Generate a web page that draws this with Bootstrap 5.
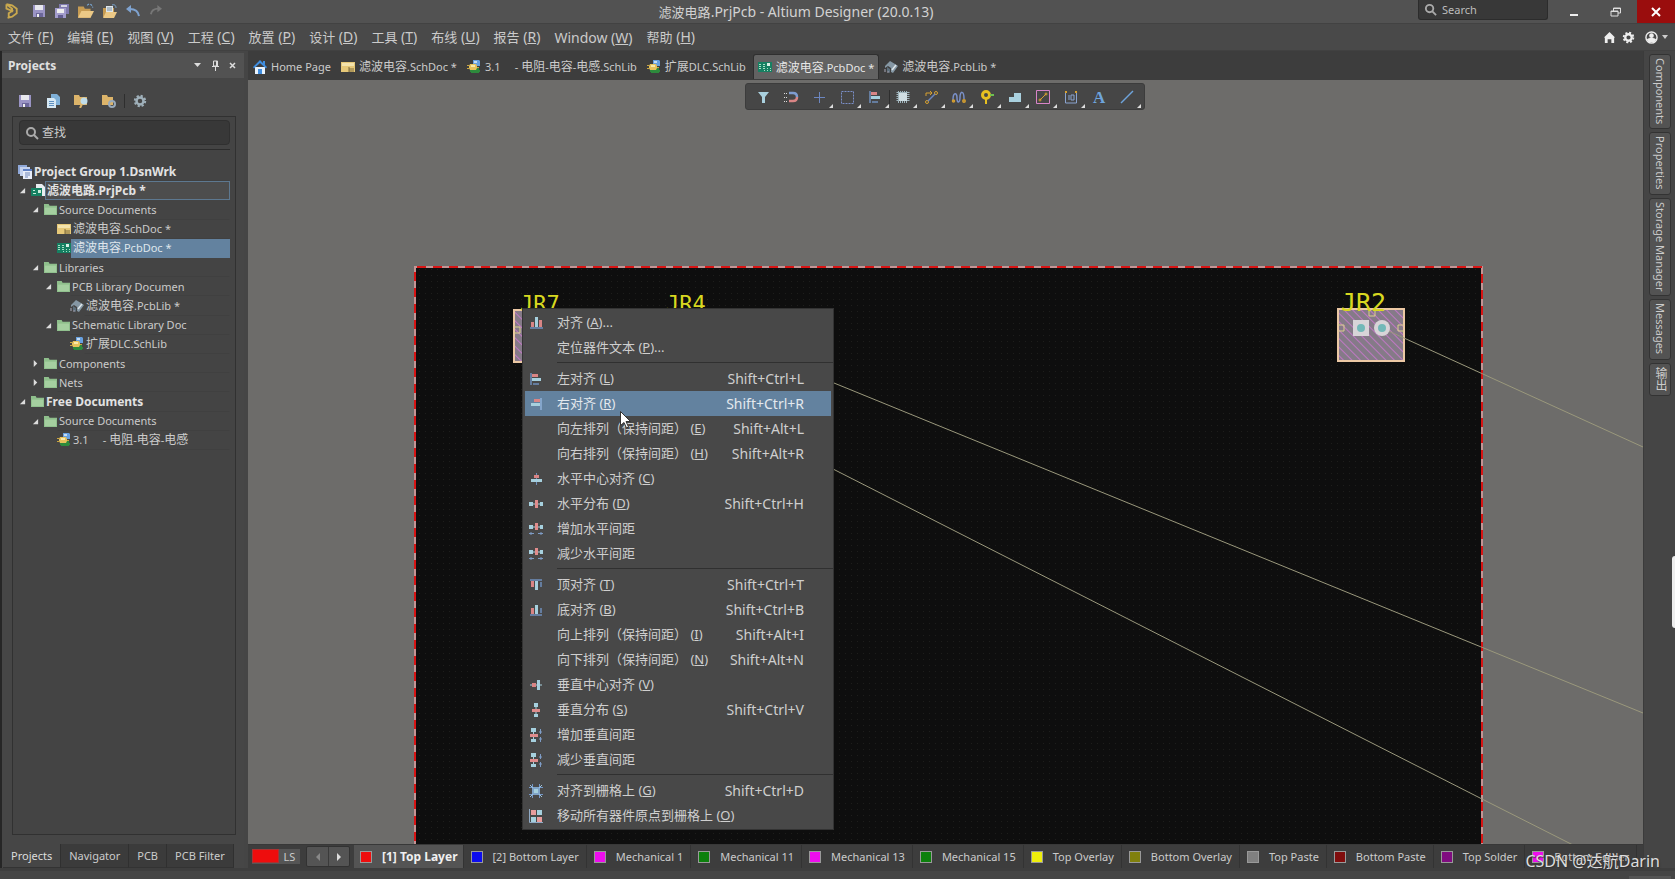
<!DOCTYPE html>
<html lang="zh-CN">
<head>
<meta charset="utf-8">
<meta name="viewport" content="width=device-width, initial-scale=1">
<title>滤波电路.PrjPcb - Altium Designer (20.0.13)</title>
<link href="https://cdn.jsdelivr.net/npm/bootstrap@5.3.0/dist/css/bootstrap.min.css" rel="stylesheet">
<style>
:root{--ui:"Noto Sans","Noto Sans CJK SC",sans-serif}
body{font:11px/19px var(--ui);color:#cbcbcb;background:#454545;white-space:nowrap}
button,input{font:inherit;color:inherit}
button{background:none;border:0;padding:0}
svg{display:block;flex:none}
.cj{font-size:12px}
.s14{font-size:14px}
.s14 .cj{font-size:13px}
.s12{font-size:12px}
.i11{width:11px;height:11px}.i13{width:13px;height:13px}.i14{width:14px;height:14px}.i16{width:16px;height:16px}
.titlebar{height:24px;background:#525252;border-bottom:1px solid #424242}
.titlebar .tools{gap:9px;padding-left:3px;padding-bottom:2px;flex:1 1 0}
.titlebar .caption{flex:none;color:#d2d2d2;padding-right:86px}
.titlebar .right{flex:1 1 0}
.gsearch{width:130px;height:20px;margin-right:5px;background:#383838;border:1px solid #2c2c2c;border-top:0;border-radius:0 0 3px 3px;padding:0 5px;gap:5px}
.gsearch input,.psearch input{background:none;border:0;outline:0;padding:0;width:100%;min-width:0}
.gsearch input::placeholder,.psearch input::placeholder{color:#bdbdbd;opacity:1}
.winbtn{width:42px;height:23px}
.winclose{width:38px;background:#9a0d0d;color:#fff}
.menubar{height:27px;background:#494949;gap:14px;padding:0 7px 0 8px;border-bottom:1px solid #414141}
.menubar a,.doctab,.layertab,.ptab{color:inherit;text-decoration:none}
.menubar .acct{gap:6px;color:#eee}
.acct .who{gap:4px}
.projpanel{width:244px;background:#464646;border-left:2px solid #262626;padding-top:2px}
.phead{height:25px;background:#525252;padding:0 7px 0 6px;color:#e0e0e0;gap:9px}
.ptools{height:38px;gap:14px;padding:8px 0 0 16px}
.ptools .bar,.actbar .bar{width:1px;height:14px;background:#2e2e2e}
.ptools .bar{margin:0 -6px}
.treebox{margin:0 8px 0 10px;border:1px solid #313131;flex:1;padding:3px 5px 0 0;background:#444}
.psearch{height:25px;margin-left:6px;background:#383838;border:1px solid #303030;border-radius:4px;padding:0 5px;gap:3px}
.psep{height:1px;background:#2c2c2c;margin:4px 0 12px 6px}
.tree{height:288px;display:grid;grid-template-rows:repeat(15,minmax(0,1fr));padding-left:5px}
.tree li{display:flex;align-items:center;position:relative}
.tree .lbl{flex:1;padding-left:1px;height:100%;line-height:16px;display:flex;align-items:center;border:1px solid transparent;border-bottom-color:#404040;white-space:pre}
.tree .b{font-weight:700;font-size:12px;color:#e2e2e2}
.tree .focus{border-color:#5d7890;background:#4d4d4d}
.tree .sel{background:#63829f;border-color:#63829f;color:#dfe6ec}
.l1{padding-left:13px}.l2{padding-left:26px}.l3{padding-left:39px}.l4{padding-left:52px}
.tw{position:absolute;margin-left:-12px;width:7px;height:7px}
.ptabs{height:24px;margin-top:9px;background:#3b3b3b;align-self:flex-start;margin-left:1px}
.ptab{padding:0 8px;border-right:1px solid #303030;border-bottom:1px solid #333;line-height:24px;text-align:center}
.ptab.on{background:#464646;color:#ddd}
.doctabs{height:29px;background:#3d3d3d;padding:3px 0 1px 0}
.doctab{gap:4px;padding:0 4px;border:1px solid transparent;height:25px;white-space:pre}
.doctab.on{background:#626262;border-color:#2f2f2f;border-bottom:0;border-radius:3px 3px 0 0;color:#e6e6e6;margin-left:2px}
.canvas{background:#6d6c6a;overflow:hidden}
.board{position:absolute;inset:0;width:100%;height:100%}
.actbar{position:absolute;top:3px;left:497px;height:27px;background:#464646;border:1px solid #3c3c3c;border-radius:3px;padding:0 3px}
.actbar button{width:28px;height:25px;display:flex;align-items:center;justify-content:center;position:relative}
.actbar svg{overflow:visible}
.actbar .bar{margin:0 -1px 0 0}
.actbar .more::after{content:"";position:absolute;right:0;bottom:1px;border:2px solid transparent;border-right-color:#ddd;border-bottom-color:#ddd}
.ctx{position:absolute;top:228px;left:274px;width:312px;padding:1px 2px;margin:0;background:#484848;border:1px solid #333;border-radius:0;color:#cfcfcf}
.ctx button{display:flex;align-items:center;width:100%;height:25px;padding:0 27px 0 4px;font-size:13px}
.ctx .t{margin-left:14px}
.ctx .k{margin-left:auto;font-size:14px}
.ctx .cj{font-size:13px}
.ctx .hot{background:#63829f;color:#e4e9ee}
.ctx .rule{height:6px;padding:2px 0 0 32px;margin-right:-2px}
.ctx .rule::before{content:"";display:block;height:1px;background:#303030}
.cursor{position:absolute;left:372px;top:331px;width:12px;height:18px}
.layers{height:24px;background:#3d3d3d;border-top:1px solid #383838;overflow:hidden}
.ls{margin:0 6px 0 4px;height:15px;background:#555}
.ls i{width:27px;height:14px;background:#ee0d0d;border:1px solid #a33}
.ls span{width:21px;line-height:15px;text-align:center}
.nav2{height:21px;background:#545454;border:1px solid #323232;border-radius:2px;margin-right:4px}
.nav2 button{width:21px;display:flex;align-items:center;justify-content:center}
.nav2 button+button{border-left:1px solid #3a3a3a}
.layertab{height:24px;padding:0 7px;gap:10px;border-right:1px solid #333}
.layertab.on{background:#545454;color:#f0f0f0;font-weight:700;font-size:12px;padding:0 5px 0 6px}
.sw{width:12px;height:12px;border:1px solid #999}
.dock{width:32px;background:#454545;border-left:1px solid #3b3b3b;padding:3px 4px 0 5px;gap:3px}
.dock button{writing-mode:vertical-rl;background:#535353;border:1px solid #333;border-radius:3px;padding:3px 0 4px;width:22px;line-height:20px}
.status{height:11px;background:#454545;border-top:3px solid #3e3e3e}
.status i{width:42px;height:3px;background:#555;margin:5px 4px 0 auto}
.mark-csdn{position:absolute;right:15px;bottom:6px;font-size:16px;line-height:24px;color:#ddd;text-shadow:1px 1px 1px #333}
.mark-csdn .cj{font-size:16px}
.grip{position:absolute;right:0;top:556px;width:3px;height:72px;background:#eee;border-radius:3px 0 0 3px}
</style>
</head>
<body class="d-flex flex-column vh-100 overflow-hidden position-relative">

<svg width="0" height="0" class="position-absolute" aria-hidden="true">
<symbol id="floppy" viewBox="0 0 14 14"><path fill="#9a94c4" d="M1 1h12v12H1z"/><path fill="#e8e8ee" d="M3 1h8v5H3z"/><path fill="#6c679a" d="M4 9h7v4H4z"/><path fill="#eee" d="M5 10h2v3H5z"/></symbol>
<symbol id="floppies" viewBox="0 0 14 14"><path fill="#7f79ad" d="M4 0h10v10H4z"/><path fill="#d4d4e4" d="M6 1h6v2H6z"/><path fill="#a29ccc" d="M0 4h11v10H0z"/><path fill="#eee" d="M2 5h7v4H2z"/><path fill="#615c90" d="M3 11h5v3H3z"/></symbol>
<symbol id="open" viewBox="0 0 14 14"><path fill="#c79c53" d="M0 3h5l1 2h5v8H0z"/><path fill="#ecc986" d="M3 7h11l-3 6H0z"/><path d="M8 2c2-2 4-1 5 2" fill="none" stroke="#79a6d0" stroke-dasharray="2 1"/></symbol>
<symbol id="opendoc" viewBox="0 0 14 14"><path fill="#c79c53" d="M0 4h11v9H0z"/><path fill="#dfe6ea" d="M3 2h7v7H3z"/><path stroke="#7a90a0" d="M4 4h5M4 6h5"/><path fill="#ecc986" d="M3 8h11l-3 6H0z"/><path d="M9 1c3-1 4 1 4 3" fill="none" stroke="#79a6d0"/></symbol>
<symbol id="undo" viewBox="0 0 14 14"><path d="M13 12C12 6 8 5 4 5" fill="none" stroke="#7fa3d0" stroke-width="2"/><path fill="#7fa3d0" d="M0 5l5-4v8z"/></symbol>
<symbol id="redo" viewBox="0 0 14 14"><path d="M2 11C3 6 6 5 10 5" fill="none" stroke="#777" stroke-width="2"/><path fill="#777" d="M14 5L9 1v8z"/></symbol>
<symbol id="mag" viewBox="0 0 14 14"><circle cx="6" cy="6" r="4" fill="none" stroke="#aaa" stroke-width="2"/><path d="M9 9l4 4" stroke="#aaa" stroke-width="2"/></symbol>
<symbol id="gear" viewBox="0 0 14 14"><circle cx="7" cy="7" r="5.200" fill="none" stroke="currentColor" stroke-width="2" stroke-dasharray="2.200 1.884"/><circle cx="7" cy="7" r="3.500" fill="none" stroke="currentColor" stroke-width="2.500"/></symbol>
<symbol id="house" viewBox="0 0 14 14"><path fill="currentColor" d="M7 1l6 6h-1v6H9V9H5v4H2V7H1z"/></symbol>
<symbol id="home" viewBox="0 0 14 14"><path fill="#e9f2fb" d="M2 7h10v7H2z"/><path fill="#3f8ee0" d="M5 9h4v5H5zM7 0l7 7-1 1.500-6-5.500-6 5.500L0 7zM10 1h2v4l-2-2z"/></symbol>
<symbol id="sch" viewBox="0 0 14 14"><path fill="#e6c878" d="M0 2h14v10H0z"/><path fill="#f4e3ac" d="M1 3h12v3H1z"/><path d="M8 9h5M8 11h5M8 7v5" stroke="#7c6a3c"/></symbol>
<symbol id="schlib" viewBox="0 0 14 14"><path fill="#67a0e0" d="M6 0h6l1 1v5H6z"/><path fill="#c4dcf4" d="M7 1h3v2H7z"/><path fill="#2d8a3c" d="M4 7h8v6H4zM3 10h10v2H3z"/><path fill="#e8c35c" d="M3 4h6l1 2v2L9 10H3L2 8V6z"/><path fill="#fae9a8" d="M4 5h4v2H4z"/><path d="M0 5.500h2M0 8.500h2M10 7.500h2" stroke="#caa53f"/></symbol>
<symbol id="pcb" viewBox="0 0 14 14"><path fill="#168062" d="M0 2h14v10H0z"/><path fill="#d9efe4" d="M9 3h3v3H9z"/><path d="M1 4.500h2M1 6.500h2M1 8.500h2M5 4.500h2M5 6.500h2M5 8.500h2M6 10.500h1M9 10.500h1M12 10.500h1M9 8.500h1M12 8.500h1" stroke="#a8e0c4"/></symbol>
<symbol id="pcbprj" viewBox="0 0 14 14"><path fill="#e8edf0" d="M5 0h6l3 3v9H5z"/><path fill="#168062" d="M0 4h11v8H0z"/><path fill="#c9ead9" d="M7 6h3v3H7zM2 6h2v1H2zM2 9h3v1H2z"/></symbol>
<symbol id="pcblib" viewBox="0 0 14 14"><path fill="#8597a4" d="M1 6l5-5 5 3 3 2-5 7-2-1V8L4 6 1 8z"/><path fill="#5d6f7c" d="M3 7l3 2v4L3 11z"/><path d="M8 10l4-5" stroke="#dfe6ea" stroke-width="1.500"/><path d="M1 9v3M4 11v2" stroke="#aab"/></symbol>
<symbol id="folder" viewBox="0 0 14 14"><path fill="#8fbf8c" d="M0 1h5l1 2h8v10H0z"/><path fill="#a5cfa0" d="M1 5h12v7H1z"/></symbol>
<symbol id="group" viewBox="0 0 14 14"><path fill="#8fa8d8" d="M0 0h9v9H0z"/><path fill="#c4d2ee" d="M2 2h10v9H2z"/><path fill="#e9eefa" d="M5 4h9v10H5z"/><path fill="#5d7fc4" d="M5 4h9v2H5z"/><path d="M7 8h5M7 10h5M7 12h3" stroke="#6f86b8"/></symbol>
<symbol id="down" viewBox="0 0 8 8"><path fill="#ddd" d="M7 1v6H1z"/></symbol>
<symbol id="side" viewBox="0 0 8 8"><path fill="#ddd" d="M2 0l4 4-4 4z"/></symbol>
<symbol id="left" viewBox="0 0 8 8"><path fill="#888" d="M6 0L2 4l4 4z"/></symbol>
<symbol id="m-bars" viewBox="0 0 14 14"><path fill="#d98585" d="M2 6h3v5H2zM10 4h3v7h-3z"/><path fill="#a6d0de" d="M6 1h3v10H6z"/><path stroke="#6f8fbc" stroke-width="1.500" d="M1 12h13"/></symbol>
<symbol id="m-bot" viewBox="0 0 14 14"><path fill="#d98585" d="M2 5h3v6H2z"/><path fill="#a6d0de" d="M6 2h3v9H6z"/><path stroke="#6f8fbc" stroke-width="1.500" d="M1 12h12M12 5v5"/></symbol>
<symbol id="m-left" viewBox="0 0 14 14"><path stroke="#6f8fbc" stroke-width="1.500" d="M2 1v12M4 12h6"/><path fill="#d98585" d="M3 2h6v3H3z"/><path fill="#a6d0de" d="M3 6h9v3H3z"/></symbol>
<symbol id="m-right" viewBox="0 0 14 14"><path stroke="#8fb0d8" stroke-width="1.500" d="M12 1v12"/><path fill="#d98585" d="M5 2h6v3H5z"/><path fill="#a6d0de" d="M2 6h9v3H2z"/></symbol>
<symbol id="m-hc" viewBox="0 0 14 14"><path stroke="#6f8fbc" d="M7.500 1v12"/><path fill="#d98585" d="M5 3h5v3H5z"/><path fill="#a6d0de" d="M2 7h11v3H2z"/></symbol>
<symbol id="m-hd" viewBox="0 0 14 14"><path stroke="#a6d0de" d="M0 7h14"/><path fill="#a6d0de" d="M0 5h4v4H0zM11 5h3v4h-3z"/><path fill="#e08c8c" d="M6 3h3v8H6z"/></symbol>
<symbol id="m-hg" viewBox="0 0 14 14"><path stroke="#a6d0de" d="M0 5h14"/><path fill="#a6d0de" d="M0 3h4v4H0zM11 3h3v4h-3z"/><path fill="#e08c8c" d="M6 1h3v7H6z"/><path stroke="#7e9cc6" d="M0 11.500h5M9 11.500h5M2 10v3M12 10v3"/></symbol>
<symbol id="m-top" viewBox="0 0 14 14"><path stroke="#6f8fbc" stroke-width="1.500" d="M1 2h12M12 4v5"/><path fill="#d98585" d="M2 3h3v6H2z"/><path fill="#a6d0de" d="M6 3h3v9H6z"/></symbol>
<symbol id="m-vc" viewBox="0 0 14 14"><path stroke="#a6d0de" d="M1 7h12"/><path fill="#d98585" d="M3 5h4v4H3z"/><path fill="#a6d0de" d="M8 2h3v10H8z"/></symbol>
<symbol id="m-vd" viewBox="0 0 14 14"><path stroke="#a6d0de" d="M7 0v14"/><path fill="#a6d0de" d="M5 0h4v4H5zM5 11h4v3H5z"/><path fill="#e08c8c" d="M3 6h8v3H3z"/></symbol>
<symbol id="m-vg" viewBox="0 0 14 14"><path stroke="#a6d0de" d="M4.500 0v14"/><path fill="#a6d0de" d="M2 0h5v4H2zM2 11h5v3H2z"/><path fill="#e08c8c" d="M1 6h8v3H1z"/><path stroke="#7e9cc6" d="M11.500 1v5M11.500 9v5M10 4h3M10 11h3"/></symbol>
<symbol id="m-grid" viewBox="0 0 14 14"><path stroke="#7597c8" d="M3.500 0v14M10.500 0v14M0 3.500h14M0 10.500h14"/><path fill="#7fa3c8" d="M3 3h8v8H3z"/><path fill="#a6d0de" d="M5 5h4v4H5z"/><path stroke="#9cc4dc" d="M1 1l3 3M13 1l-3 3M1 13l3-3M13 13l-3-3"/></symbol>
<symbol id="m-org" viewBox="0 0 14 14"><path stroke="#8fa9c4" fill="none" d="M.5 0v13.500H14"/><path fill="#e89c9c" d="M2 1h5v5H2zM8 8h5v5H8z"/><path fill="#a6d0de" d="M8 1h5v5H8zM2 8h5v5H2z"/></symbol>
</svg>

<header class="titlebar d-flex align-items-center flex-shrink-0">
  <div class="tools d-flex align-items-center">
    <svg class="i16" viewBox="0 0 14 14"><path d="M3 1l5 1 4 3v4l-4 3-4 1M3 1v4l5 2-3 2v4M3 1l5 4v3" fill="none" stroke="#c9a84e" stroke-width="1.600"/></svg>
    <button aria-label="保存"><svg class="i14 ms-1"><use href="#floppy"/></svg></button>
    <button aria-label="全部保存"><svg class="i14"><use href="#floppies"/></svg></button>
    <button aria-label="打开"><svg class="i16"><use href="#open"/></svg></button>
    <button aria-label="打开文档"><svg class="i14"><use href="#opendoc"/></svg></button>
    <button aria-label="撤销"><svg class="i14"><use href="#undo"/></svg></button>
    <button aria-label="重做"><svg class="i13"><use href="#redo"/></svg></button>
  </div>
  <div class="caption s14">滤波电路.PrjPcb - Altium Designer (20.0.13)</div>
  <div class="right d-flex justify-content-end align-items-start align-self-start">
    <label class="gsearch d-flex align-items-center"><svg class="i13"><use href="#mag"/></svg><input type="text" placeholder="Search" aria-label="Search"></label>
    <button class="winbtn" aria-label="最小化"><svg class="mx-auto" width="10" height="10"><path d="M1 8h8" stroke="#eee" stroke-width="2"/></svg></button>
    <button class="winbtn" aria-label="还原"><svg class="mx-auto" width="12" height="10" fill="none" stroke="#ddd"><path d="M3.500 4V1h7v5H8M1 4h7v5H1zM3 1.500h8M1 4.500h7"/></svg></button>
    <button class="winbtn winclose" aria-label="关闭"><svg class="mx-auto" width="10" height="10"><path d="M1 1l8 8M9 1L1 9" stroke="#fff" stroke-width="2"/></svg></button>
  </div>
</header>

<nav class="menubar s14 d-flex align-items-center flex-shrink-0">
  <a href="#">文件 (<u>F</u>)</a><a href="#">编辑 (<u>E</u>)</a><a href="#">视图 (<u>V</u>)</a><a href="#">工程 (<u>C</u>)</a><a href="#">放置 (<u>P</u>)</a><a href="#">设计 (<u>D</u>)</a><a href="#">工具 (<u>T</u>)</a><a href="#">布线 (<u>U</u>)</a><a href="#">报告 (<u>R</u>)</a><a href="#">Window (<u>W</u>)</a><a href="#">帮助 (<u>H</u>)</a>
  <div class="acct d-flex align-items-center ms-auto">
    <svg class="i13"><use href="#house"/></svg><svg class="i13 me-1"><use href="#gear"/></svg>
    <span class="who d-flex align-items-center"><svg class="i13" viewBox="0 0 14 14"><circle cx="7" cy="7" r="6" fill="none" stroke="#eee" stroke-width="1.500"/><circle cx="7" cy="5" r="2.500" fill="#eee"/><path fill="#eee" d="M2 9c2-2 8-2 10 0l-2 3.500H4z"/></svg>
    <svg width="6" height="4"><path fill="#ccc" d="M0 0h6L3 4z"/></svg></span>
  </div>
</nav>

<main class="d-flex flex-grow-1" style="min-height:0">
  <aside class="projpanel d-flex flex-column flex-shrink-0">
    <div class="phead s12 d-flex align-items-center"><strong class="me-auto">Projects</strong>
      <svg width="8" height="5"><path fill="#ddd" d="M0 0h7L3.500 4z"/></svg>
      <svg width="9" height="11"><path d="M2.500 1h4v5h-4zM1 6.500h7M4.500 7v4M5.500 1v5" fill="none" stroke="#ddd"/></svg>
      <svg width="8" height="8"><path d="M1 1l5 5M6 1L1 6" stroke="#ddd" stroke-width="1.500"/></svg>
    </div>
    <div class="ptools d-flex align-items-center">
      <button aria-label="保存"><svg class="i14"><use href="#floppy"/></svg></button>
      <button aria-label="编译"><svg class="i14" viewBox="0 0 14 14"><path fill="#7fb0d8" d="M5 0h6l3 3v8H5z"/><path fill="#d6e8f4" d="M1 4h7l2 2v8H1z"/><path stroke="#5d8fc0" d="M3 7.500h5M3 9.500h5M3 11.500h5"/></svg></button>
      <button aria-label="查找文件"><svg class="i14" viewBox="0 0 14 14"><path fill="#dcb46a" d="M0 1h5l1 2h7v8H0z"/><circle cx="10" cy="7" r="3.500" fill="#bfdcea"/><path stroke="#dcb46a" stroke-width="2" d="M8 10l-2 4"/></svg></button>
      <button aria-label="文件选项"><svg class="i14" viewBox="0 0 14 14"><path fill="#dcb46a" d="M0 1h5l1 2h5v8H0z"/><circle cx="10" cy="10" r="3" fill="none" stroke="#9ab" stroke-width="2"/></svg></button>
      <span class="bar"></span>
      <button aria-label="设置" style="color:#9fb0ba"><svg class="i14"><use href="#gear"/></svg></button>
    </div>
    <div class="treebox">
      <label class="psearch d-flex align-items-center"><svg class="i14"><use href="#mag"/></svg><input type="text" value="查找" class="s12" aria-label="查找"></label>
      <div class="psep"></div>
      <ul class="tree list-unstyled mb-0">
        <li><svg class="i14"><use href="#group"/></svg><span class="lbl b">Project Group 1.DsnWrk</span></li>
        <li class="l1"><svg class="tw"><use href="#down"/></svg><svg class="i14"><use href="#pcbprj"/></svg><span class="lbl b focus">滤波电路.PrjPcb *</span></li>
        <li class="l2"><svg class="tw"><use href="#down"/></svg><svg class="i13"><use href="#folder"/></svg><span class="lbl">Source Documents</span></li>
        <li class="l3"><svg class="i14"><use href="#sch"/></svg><span class="lbl">滤波电容.SchDoc *</span></li>
        <li class="l3"><svg class="i14"><use href="#pcb"/></svg><span class="lbl sel">滤波电容.PcbDoc *</span></li>
        <li class="l2"><svg class="tw"><use href="#down"/></svg><svg class="i13"><use href="#folder"/></svg><span class="lbl">Libraries</span></li>
        <li class="l3"><svg class="tw"><use href="#down"/></svg><svg class="i13"><use href="#folder"/></svg><span class="lbl">PCB Library Documen</span></li>
        <li class="l4"><svg class="i14"><use href="#pcblib"/></svg><span class="lbl">滤波电容.PcbLib *</span></li>
        <li class="l3"><svg class="tw"><use href="#down"/></svg><svg class="i13"><use href="#folder"/></svg><span class="lbl">Schematic Library Doc</span></li>
        <li class="l4"><svg class="i14"><use href="#schlib"/></svg><span class="lbl">扩展DLC.SchLib</span></li>
        <li class="l2"><svg class="tw"><use href="#side"/></svg><svg class="i13"><use href="#folder"/></svg><span class="lbl">Components</span></li>
        <li class="l2"><svg class="tw"><use href="#side"/></svg><svg class="i13"><use href="#folder"/></svg><span class="lbl">Nets</span></li>
        <li class="l1"><svg class="tw"><use href="#down"/></svg><svg class="i13"><use href="#folder"/></svg><span class="lbl b">Free Documents</span></li>
        <li class="l2"><svg class="tw"><use href="#down"/></svg><svg class="i13"><use href="#folder"/></svg><span class="lbl">Source Documents</span></li>
        <li class="l3"><svg class="i14"><use href="#schlib"/></svg><span class="lbl">3.1     - 电阻-电容-电感</span></li>
      </ul>
    </div>
    <div class="ptabs d-flex"><a class="ptab on" href="#">Projects</a><a class="ptab" href="#">Navigator</a><a class="ptab" href="#">PCB</a><a class="ptab" href="#">PCB Filter</a></div>
  </aside>

  <section class="d-flex flex-column flex-grow-1 ms-1" style="min-width:0">
    <nav class="doctabs d-flex flex-shrink-0">
      <a class="doctab d-flex align-items-center" href="#"><svg class="i14"><use href="#home"/></svg>Home Page</a>
      <a class="doctab d-flex align-items-center" href="#"><svg class="i14"><use href="#sch"/></svg><span>滤波电容.SchDoc *</span></a>
      <a class="doctab d-flex align-items-center" href="#"><svg class="i14"><use href="#schlib"/></svg><span>3.1     - 电阻-电容-电感.SchLib</span></a>
      <a class="doctab d-flex align-items-center" href="#"><svg class="i14"><use href="#schlib"/></svg><span>扩展DLC.SchLib</span></a>
      <a class="doctab on d-flex align-items-center" href="#"><svg class="i14"><use href="#pcb"/></svg><span>滤波电容.PcbDoc *</span></a>
      <a class="doctab d-flex align-items-center" href="#"><svg class="i14"><use href="#pcblib"/></svg><span>滤波电容.PcbLib *</span></a>
    </nav>

    <div class="canvas position-relative flex-grow-1">
      <svg class="board" viewBox="0 0 1395 765" preserveAspectRatio="xMinYMin slice">
        <defs>
          <pattern id="dots" width="6" height="6" patternUnits="userSpaceOnUse"><path fill="#1e1e1c" d="M3 3h1v1H3z"/></pattern>
          <pattern id="hatch" width="6" height="6" patternUnits="userSpaceOnUse" patternTransform="rotate(-45)"><path fill="#857a88" d="M0 0h6v6H0z"/><path fill="#c078c4" d="M0 0h1v6H0z"/></pattern>
        </defs>
        <path fill="#0e0e0e" d="M167 187h1067v590H167z"/><path fill="url(#dots)" d="M167 187h1067v590H167z"/>
        <path fill="none" stroke="#c49494" stroke-width="2" d="M167 777V187h1067v590"/>
        <path fill="none" stroke="#d81414" stroke-width="2" stroke-dasharray="9 7" d="M167 777V187h1067v590"/>
        <g stroke="#dcd08c" fill="none">
          <path fill="url(#hatch)" stroke="#ecc8a4" stroke-width="2" d="M1090 229h66v52h-66zM266 230h66v52h-66z"/>
          <path d="M1121 229v7h6v-7M1090 245h6v6h-6M1156 245h-6v6h6M266 247h6v6h-6"/>
        </g>
        <g font-family="DejaVu Sans Mono" fill="#d8d820"><text x="1093" y="231" font-size="25">JR2</text><text x="272" y="231" font-size="22">JR7</text><text x="418" y="231" font-size="22">JR4</text></g>
        <path stroke="#9a987c" d="M1134 248l261 119M586 303l809 330M586 389.500L1234 719l91 46" fill="none"/>
        <path fill="#d8d4d8" d="M1105 240h16v16h-16z"/><circle cx="1134" cy="248" r="8" fill="#d8d4d8"/>
        <circle cx="1113" cy="248" r="4" fill="#72b8b8"/><circle cx="1134" cy="248" r="4" fill="#72b8b8"/>
      </svg>

      <div class="actbar d-flex align-items-center">
        <button aria-label="过滤"><svg class="i14" viewBox="0 0 14 14"><path fill="#a9d0de" d="M2 2h11L9 7v6H6V7z"/></svg></button>
        <button aria-label="捕捉"><svg class="i14" viewBox="0 0 14 14"><path d="M5 3h4q4 0 4 4" fill="none" stroke="#7e9cd0" stroke-width="2.500"/><path d="M13 7q0 4-4 4H5" fill="none" stroke="#d98585" stroke-width="2.500"/><path stroke="#ddd" stroke-dasharray="1 1" d="M0 3.500h4M0 7.500h4M0 11.500h4"/></svg></button>
        <button class="more" aria-label="移动"><svg class="i14"><path d="M7.500 2v11M2 7.500h11" stroke="#6c86c0"/></svg></button>
        <button class="more" aria-label="选择"><svg class="i14"><path d="M1.500 1.500h12v12h-12z" fill="none" stroke="#7a8fc8" stroke-dasharray="2 1"/></svg></button>
        <button class="more" aria-label="对齐"><svg class="i14"><use href="#m-left"/></svg></button>
        <span class="bar"></span>
        <button class="more" aria-label="器件"><svg class="i14"><path stroke="#9fb4bc" stroke-dasharray="1 1" stroke-width="12" d="M2 7h10"/><path stroke="#9fb4bc" stroke-dasharray="1 1" stroke-width="13" d="M7 2v10"/><path fill="#cfdde2" d="M3 3h8v8H3z"/></svg></button>
        <button class="more" aria-label="布线"><svg class="i14" fill="none" stroke="#d6a030"><circle cx="3" cy="12" r="1.500"/><circle cx="12" cy="3" r="1.500"/><path d="M2 6V3h5M6 1l2 2-2 2"/><path stroke="#6c86c0" stroke-width="1.500" d="M4 11l7-7"/></svg></button>
        <button class="more" aria-label="差分"><svg class="i14" fill="none" stroke="#7a90c8" stroke-width="1.500"><path d="M1 10c0-8 4-8 4-2s3 5 3-1 4-7 4 2"/><circle cx="1.500" cy="11" r="1" stroke="#d6a030"/><circle cx="12" cy="11" r="1.200" stroke="#d6a030"/></svg></button>
        <button class="more" aria-label="过孔"><svg class="i14"><circle cx="6" cy="5" r="3.500" fill="none" stroke="#e6c020" stroke-width="3"/><path stroke="#e6c020" stroke-width="2" d="M6 9v5"/><path stroke="#6fbf50" stroke-width="2" d="M10 5h4"/></svg></button>
        <button class="more" aria-label="铺铜"><svg class="i14"><path fill="#a9d0de" d="M1 7h5V3h7v9H1z"/></svg></button>
        <button class="more" aria-label="禁布"><svg class="i14" fill="none"><path stroke="#d884c8" d="M.5.500h13v13H.500z"/><path stroke="#d6a030" d="M4 10l6-6"/><circle cx="4" cy="10" r="1" stroke="#d6a030"/><circle cx="10" cy="4" r="1" stroke="#d6a030"/></svg></button>
        <button class="more" aria-label="尺寸"><svg class="i14" fill="none" stroke="#8aa4d0"><path d="M1.500 3v10h11V3M5 5v5M7 5h3v5H7z"/><path stroke="#d6a030" stroke-width="2" d="M1 2h2M11 2h2"/></svg></button>
        <button aria-label="文本"><svg class="i14"><text x="1" y="13" font-family="Liberation Serif" font-weight="700" font-size="17" fill="#6ea4dc">A</text></svg></button>
        <button class="more" aria-label="线条"><svg class="i14"><path d="M1 13L13 1" stroke="#6ea4dc" stroke-width="1.500"/></svg></button>
      </div>

      <div class="ctx" role="menu">
        <button><svg class="i14"><use href="#m-bars"/></svg><span class="t">对齐 (<u>A</u>)...</span></button>
        <button><svg class="i14"></svg><span class="t">定位器件文本 (<u>P</u>)...</span></button>
        <div class="rule"></div>
        <button><svg class="i14"><use href="#m-left"/></svg><span class="t">左对齐 (<u>L</u>)</span><span class="k">Shift+Ctrl+L</span></button>
        <button class="hot"><svg class="i14"><use href="#m-right"/></svg><span class="t">右对齐 (<u>R</u>)</span><span class="k">Shift+Ctrl+R</span></button>
        <button><svg class="i14"></svg><span class="t">向左排列（保持间距） (<u>E</u>)</span><span class="k">Shift+Alt+L</span></button>
        <button><svg class="i14"></svg><span class="t">向右排列（保持间距） (<u>H</u>)</span><span class="k">Shift+Alt+R</span></button>
        <button><svg class="i14"><use href="#m-hc"/></svg><span class="t">水平中心对齐 (<u>C</u>)</span></button>
        <button><svg class="i14"><use href="#m-hd"/></svg><span class="t">水平分布 (<u>D</u>)</span><span class="k">Shift+Ctrl+H</span></button>
        <button><svg class="i14"><use href="#m-hg"/></svg><span class="t">增加水平间距</span></button>
        <button><svg class="i14"><use href="#m-hg"/></svg><span class="t">减少水平间距</span></button>
        <div class="rule"></div>
        <button><svg class="i14"><use href="#m-top"/></svg><span class="t">顶对齐 (<u>T</u>)</span><span class="k">Shift+Ctrl+T</span></button>
        <button><svg class="i14"><use href="#m-bot"/></svg><span class="t">底对齐 (<u>B</u>)</span><span class="k">Shift+Ctrl+B</span></button>
        <button><svg class="i14"></svg><span class="t">向上排列（保持间距） (<u>I</u>)</span><span class="k">Shift+Alt+I</span></button>
        <button><svg class="i14"></svg><span class="t">向下排列（保持间距） (<u>N</u>)</span><span class="k">Shift+Alt+N</span></button>
        <button><svg class="i14"><use href="#m-vc"/></svg><span class="t">垂直中心对齐 (<u>V</u>)</span></button>
        <button><svg class="i14"><use href="#m-vd"/></svg><span class="t">垂直分布 (<u>S</u>)</span><span class="k">Shift+Ctrl+V</span></button>
        <button><svg class="i14"><use href="#m-vg"/></svg><span class="t">增加垂直间距</span></button>
        <button><svg class="i14"><use href="#m-vg"/></svg><span class="t">减少垂直间距</span></button>
        <div class="rule"></div>
        <button><svg class="i14"><use href="#m-grid"/></svg><span class="t">对齐到栅格上 (<u>G</u>)</span><span class="k">Shift+Ctrl+D</span></button>
        <button><svg class="i14"><use href="#m-org"/></svg><span class="t">移动所有器件原点到栅格上 (<u>O</u>)</span></button>
      </div>
      <svg class="cursor" viewBox="0 0 12 18"><path fill="#fff" stroke="#333" d="M.5.500v14l3.500-3 2.500 5.500 2-1L6 10.500h4.500z"/></svg>
    </div>

    <nav class="layers d-flex align-items-center flex-shrink-0">
      <button class="ls d-flex"><i></i><span>LS</span></button>
      <div class="nav2 d-flex"><button aria-label="上一层"><svg width="8" height="8"><use href="#left"/></svg></button><button aria-label="下一层"><svg width="8" height="8"><use href="#side"/></svg></button></div>
      <a class="layertab on d-flex align-items-center" href="#"><i class="sw" style="background:#ee0d0d"></i>[1] Top Layer</a>
      <a class="layertab d-flex align-items-center" href="#"><i class="sw" style="background:#0d0dee"></i>[2] Bottom Layer</a>
      <a class="layertab d-flex align-items-center" href="#"><i class="sw" style="background:#ee0dee"></i>Mechanical 1</a>
      <a class="layertab d-flex align-items-center" href="#"><i class="sw" style="background:#0d800d"></i>Mechanical 11</a>
      <a class="layertab d-flex align-items-center" href="#"><i class="sw" style="background:#ee0dee"></i>Mechanical 13</a>
      <a class="layertab d-flex align-items-center" href="#"><i class="sw" style="background:#0d800d"></i>Mechanical 15</a>
      <a class="layertab d-flex align-items-center" href="#"><i class="sw" style="background:#eeee0d"></i>Top Overlay</a>
      <a class="layertab d-flex align-items-center" href="#"><i class="sw" style="background:#80800d"></i>Bottom Overlay</a>
      <a class="layertab d-flex align-items-center" href="#"><i class="sw" style="background:#808080"></i>Top Paste</a>
      <a class="layertab d-flex align-items-center" href="#"><i class="sw" style="background:#800d0d"></i>Bottom Paste</a>
      <a class="layertab d-flex align-items-center" href="#"><i class="sw" style="background:#800d80"></i>Top Solder</a>
      <a class="layertab d-flex align-items-center" href="#"><i class="sw" style="background:#ee0dee"></i>Bottom Solder</a>
    </nav>
  </section>

  <aside class="dock d-flex flex-column flex-shrink-0">
    <button>Components</button><button>Properties</button><button>Storage Manager</button><button>Messages</button><button>输出</button>
  </aside>
</main>
<footer class="status d-flex flex-shrink-0"><i></i></footer>
<div class="mark-csdn">CSDN @达航Darin</div>
<div class="grip"></div>

<script src="https://cdn.jsdelivr.net/npm/bootstrap@5.3.0/dist/js/bootstrap.bundle.min.js"></script>
<script>
// Chinese runs take their own size beside the Latin face
const walker = document.createTreeWalker(document.body, NodeFilter.SHOW_TEXT);
const found = [];
while (walker.nextNode()) if (/[\u4e00-\u9fff]/.test(walker.currentNode.data) && walker.currentNode.parentNode.tagName !== 'SCRIPT') found.push(walker.currentNode);
for (const node of found) {
  const box = document.createElement('span');
  for (const part of node.data.split(/([\u4e00-\u9fff\uff08\uff09]+)/)) {
    if (!part) continue;
    if (/[\u4e00-\u9fff]/.test(part)) {
      const s = document.createElement('span');
      s.className = 'cj';
      s.textContent = part;
      box.append(s);
    } else box.append(part);
  }
  node.replaceWith(box);
}
</script>
</body>
</html>
